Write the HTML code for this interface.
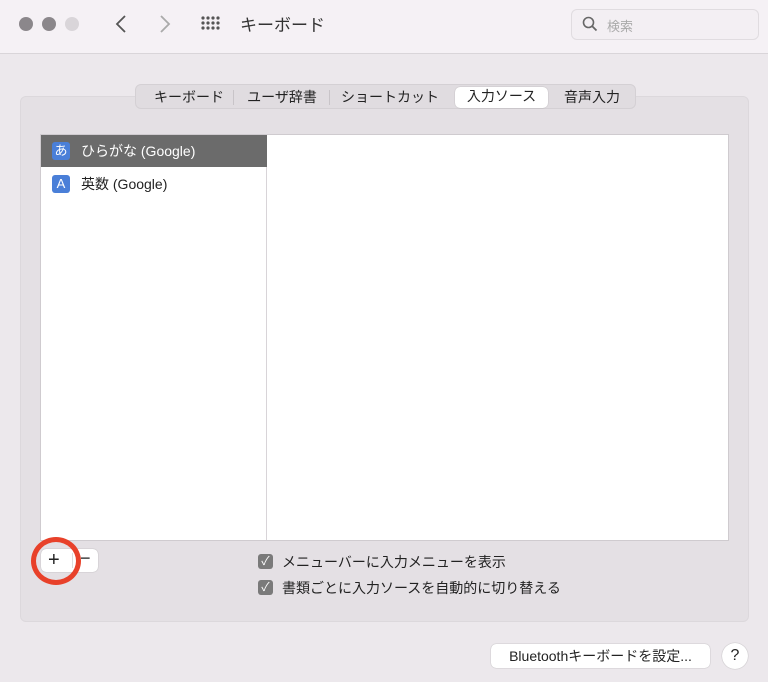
<!DOCTYPE html><html><head><meta charset="utf-8"><style>
*{margin:0;padding:0;box-sizing:border-box}
body{width:768px;height:682px;background:#ece8ec;font-family:"Liberation Sans","Noto Sans CJK JP",sans-serif;position:relative;overflow:hidden;color:#222}
.a{position:absolute}
.title{left:0;top:0;width:768px;height:54px;background:#f5f1f5;border-bottom:1px solid #d9d5d9}
.dot{width:14px;height:14px;border-radius:50%;top:17px}
.group{left:20px;top:96px;width:729px;height:526px;background:#e4e0e4;border-radius:6px;border:1px solid #dcd8dc}
.tabs{left:135px;top:84px;width:501px;height:25px;background:#e0dce0;border-radius:6px;border:1px solid #d4d0d4;font-size:14px}
.tab{top:3px;height:19px;line-height:19px;text-align:center}
.sep{top:5px;width:1px;height:15px;background:#c8c4c8}
.list{left:40px;top:134px;width:689px;height:407px;background:#fff;border:1px solid #cfcbcf}
.row{font-size:14px;height:32px;line-height:32px;left:0;width:226px}
.ic{width:18px;height:18px;border-radius:3px;background:#4a7fd8;color:#fff;font-size:13px;line-height:18px;text-align:center;left:11px;top:7px}
.cb{width:15px;height:15px;border-radius:3px;background:#7a7a7a;left:258px;color:#fff;font-size:12px;line-height:15px;text-align:center}
.lbl{font-size:14px;left:282px}
</style></head><body>
<div class="a title"></div>
<div class="a dot" style="left:19px;background:#8b878b"></div>
<div class="a dot" style="left:42px;background:#8b878b"></div>
<div class="a dot" style="left:65px;background:#d9d5d9"></div>
<svg class="a" style="left:114px;top:14px" width="14" height="20"><path d="M11 2L3 10l8 8" fill="none" stroke="#555" stroke-width="1.8"/></svg>
<svg class="a" style="left:158px;top:14px" width="14" height="20"><path d="M3 2l8 8-8 8" fill="none" stroke="#aaa" stroke-width="1.8"/></svg>
<svg class="a" style="left:201px;top:16px" width="22" height="16"><g fill="#555"><circle cx="2" cy="2" r="1.6"/><circle cx="7" cy="2" r="1.6"/><circle cx="12" cy="2" r="1.6"/><circle cx="17" cy="2" r="1.6"/><circle cx="2" cy="7" r="1.6"/><circle cx="7" cy="7" r="1.6"/><circle cx="12" cy="7" r="1.6"/><circle cx="17" cy="7" r="1.6"/><circle cx="2" cy="12" r="1.6"/><circle cx="7" cy="12" r="1.6"/><circle cx="12" cy="12" r="1.6"/><circle cx="17" cy="12" r="1.6"/></g></svg>
<div class="a" style="left:240px;top:11px;font-size:17px;color:#333">キーボード</div>
<div class="a" style="left:571px;top:9px;width:188px;height:31px;border:1px solid #e0dce0;border-radius:6px;background:#f3eff3"></div>
<svg class="a" style="left:582px;top:16px" width="16" height="16"><circle cx="6.5" cy="6.5" r="5" fill="none" stroke="#666" stroke-width="1.6"/><path d="M10 10l4.5 4.5" stroke="#666" stroke-width="1.8"/></svg>
<div class="a" style="left:607px;top:16px;font-size:13px;color:#aaa">検索</div>
<div class="a group"></div>
<div class="a tabs">
<div class="a tab" style="left:8px;width:90px">キーボード</div>
<div class="a sep" style="left:97px"></div>
<div class="a tab" style="left:100px;width:92px">ユーザ辞書</div>
<div class="a sep" style="left:193px"></div>
<div class="a tab" style="left:196px;width:116px">ショートカット</div>
<div class="a tab" style="left:319px;top:2px;height:21px;width:93px;background:#fff;border-radius:5px;box-shadow:0 0 1px rgba(0,0,0,.3)">入力ソース</div>
<div class="a tab" style="left:414px;width:84px">音声入力</div>
</div>
<div class="a list">
<div class="a" style="left:225px;top:0;width:1px;height:405px;background:#d8d4d8"></div>
<div class="a row" style="top:0;background:#6b6b6b;color:#fff"><div class="a ic" style="top:7px">あ</div><span class="a" style="left:40px">ひらがな (Google)</span></div>
<div class="a row" style="top:33px"><div class="a ic">A</div><span class="a" style="left:40px">英数 (Google)</span></div>
</div>
<div class="a" style="left:41px;top:549px;width:57px;height:23px;background:#fff;border-radius:5px;box-shadow:0 0 1px rgba(0,0,0,.35)"></div>
<div class="a" style="left:72px;top:553px;width:1px;height:15px;background:#ddd"></div>
<div class="a" style="left:48px;top:549px;font-size:20px">+</div>
<div class="a" style="left:80px;top:548px;font-size:18px">−</div>
<div class="a" style="left:31px;top:537px;width:50px;height:48px;border:5px solid #e8412a;border-radius:50%"></div>
<div class="a cb" style="top:554px">✓</div><div class="a lbl" style="top:552px">メニューバーに入力メニューを表示</div>
<div class="a cb" style="top:580px">✓</div><div class="a lbl" style="top:578px">書類ごとに入力ソースを自動的に切り替える</div>
<div class="a" style="left:491px;top:644px;width:219px;height:24px;background:#fff;border-radius:5px;box-shadow:0 0 1px rgba(0,0,0,.4);font-size:14px;line-height:24px;text-align:center">Bluetoothキーボードを設定...</div>
<div class="a" style="left:722px;top:643px;width:26px;height:26px;border-radius:50%;background:#fff;box-shadow:0 0 1px rgba(0,0,0,.4);font-size:16px;line-height:26px;text-align:center">?</div>
</body></html>
